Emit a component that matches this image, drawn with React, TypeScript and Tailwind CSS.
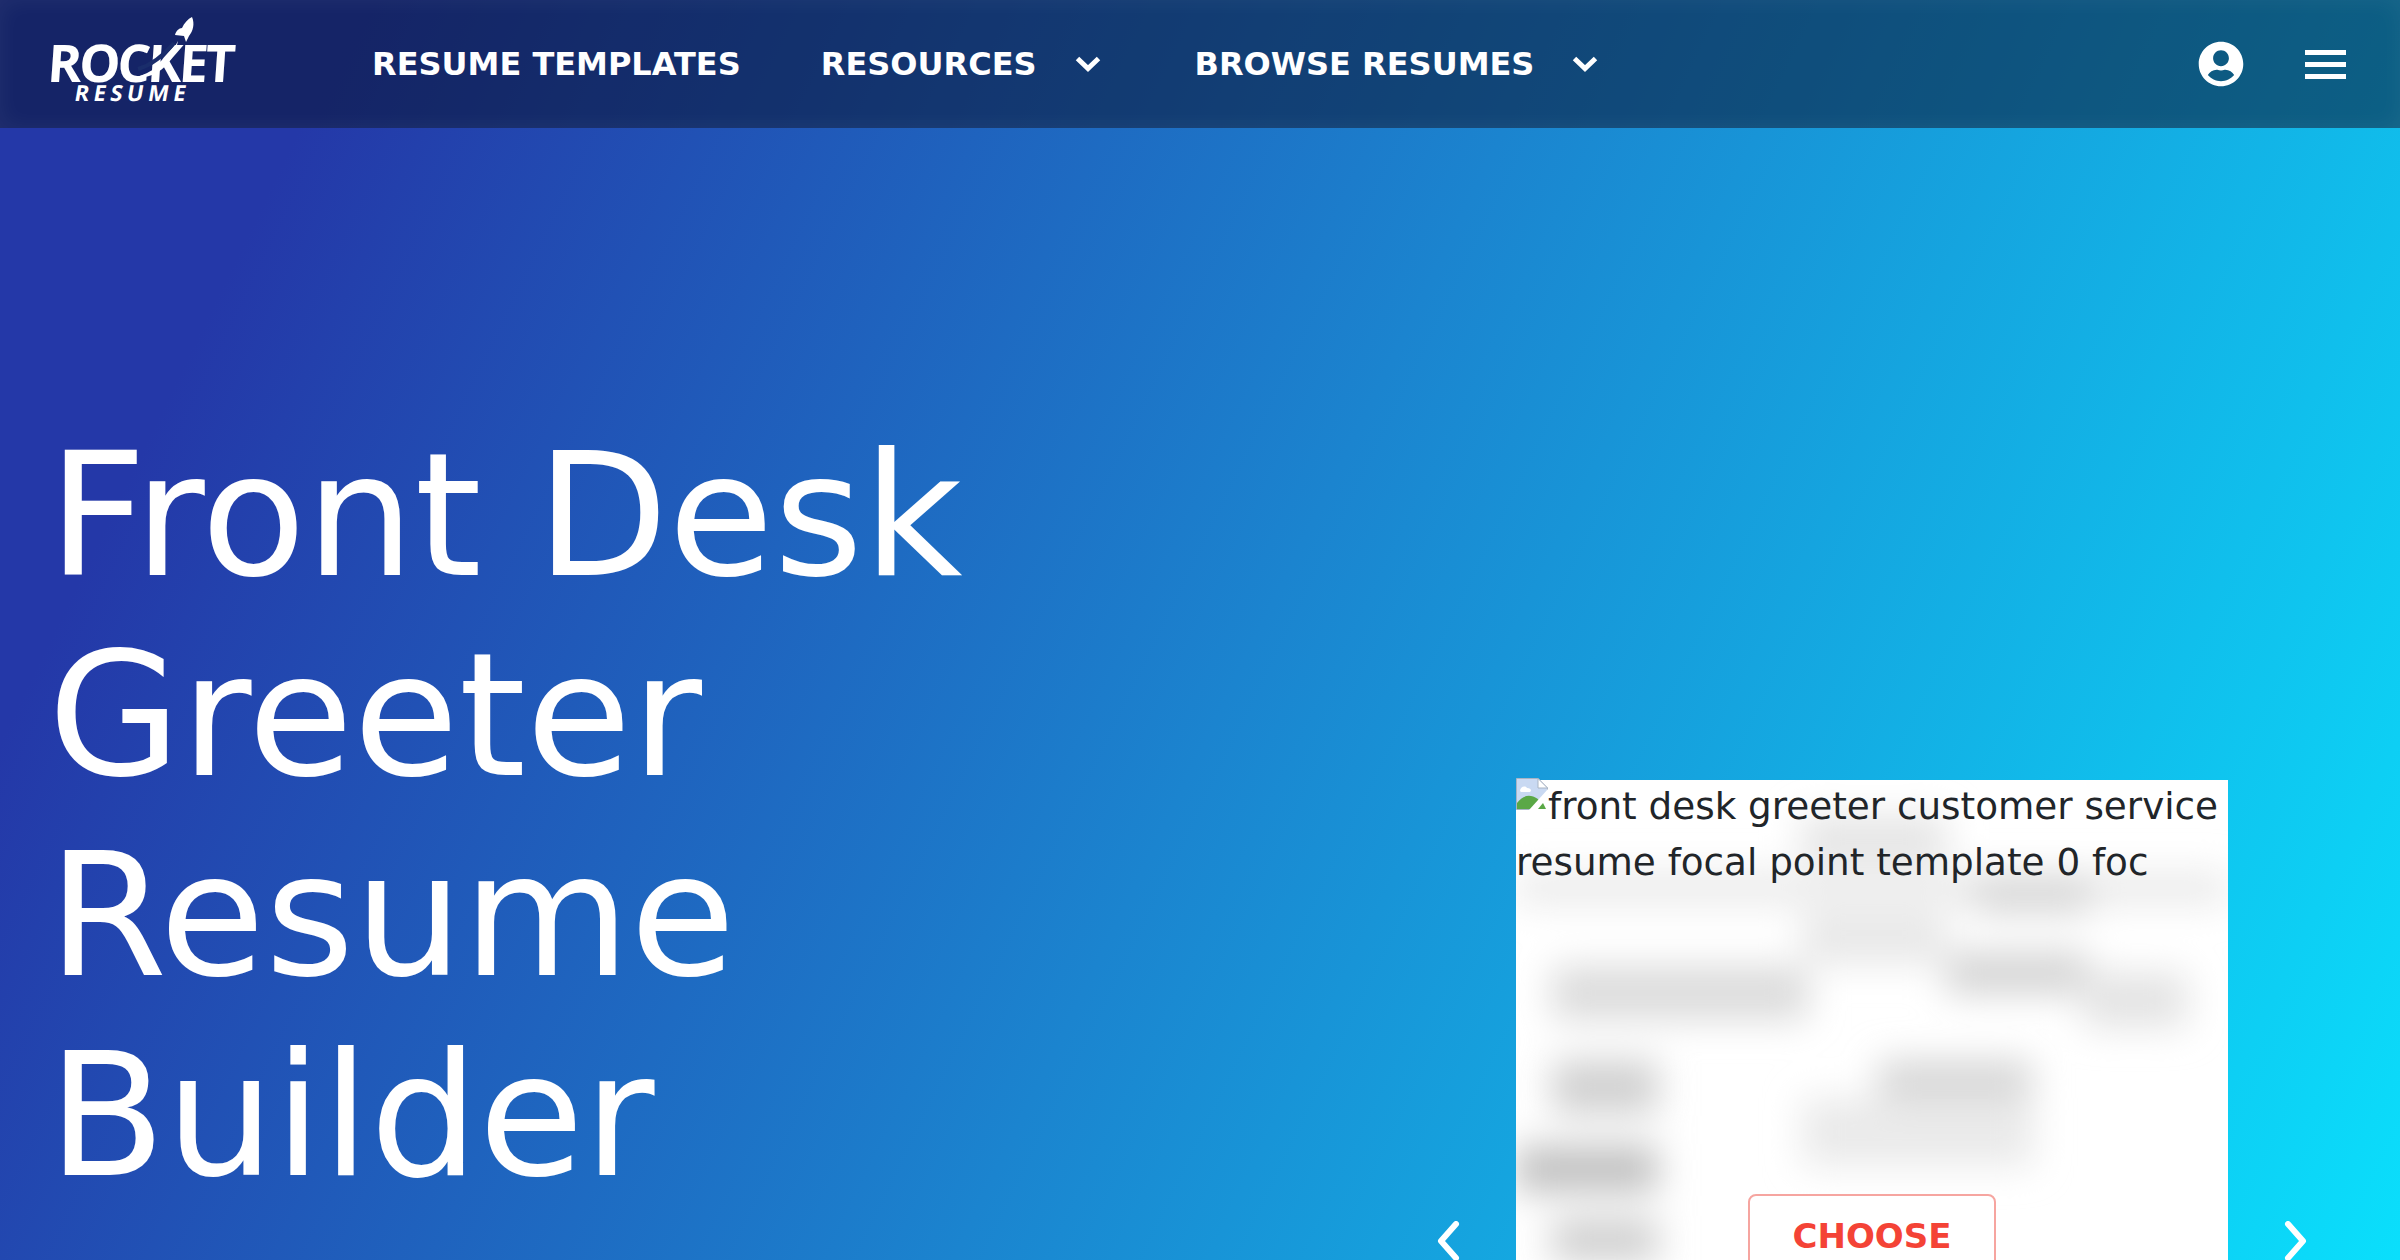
import { FaUserCircle } from 'react-icons/fa';

// ── Logo: real text, with the rocket and swoosh drawn over it ────────────────

function Logo() {
  return (
    <div className="relative w-[190px] h-[90px] shrink-0 text-white">
      <span className="absolute left-0 top-[17px] -skew-x-[4deg] text-[52px] leading-[51px] font-bold tracking-[-3px] font-['Open_Sans',sans-serif]">
        ROCKET
      </span>
      <span className="absolute left-[27px] top-[60px] -skew-x-[10deg] text-[22px] leading-[26px] font-bold tracking-[4.5px] font-['Open_Sans',sans-serif]">
        RESUME
      </span>
      <svg className="absolute left-0 top-0 overflow-visible" width="190" height="90" viewBox="0 0 190 90" fill="none">
        <path d="M90 50 C104 46 116 36 126 24" stroke="#1a2d6b" strokeWidth="4" />
        <path d="M85 59 C104 55 120 42 130 22 C126 42 112 60 85 59 Z" fill="#fff" />
        <path d="M144 -2 C147 5 145 12 141 17 L138 23 L136 17 L127 16 C128 12 131 9 134 9 C136 4 140 0 144 -2 Z" fill="#fff" />
      </svg>
    </div>
  );
}

function Chevron() {
  return (
    <svg width="26" height="16" viewBox="0 0 26 16" fill="none" className="shrink-0">
      <path d="M2.5 2.5 L13 12.5 L23.5 2.5" stroke="#fff" strokeWidth="5" />
    </svg>
  );
}

// Browser's broken-image glyph, blown up
function BrokenImage() {
  return (
    <svg width="32" height="32" viewBox="0 0 32 32" className="inline-block align-top">
      <path d="M0.5 0.5 H22 L31.5 10 V31.5 H0.5 Z" fill="#c9d9f2" stroke="#a9b4c4" />
      <path d="M22 0.5 V10 H31.5 Z" fill="#fff" stroke="#a9b4c4" />
      <path d="M4 13 C4 9 9 7 11 10 C15 10 16 13 14 14 H5 Z" fill="#fff" />
      <path d="M1 31 V25 C8 15 20 14 30 31 Z" fill="#5aa846" />
      <path d="M13 32 L32 11 V32 Z" fill="#fff" />
      <path d="M22 31 L27 25 L30 31 Z" fill="#5aa846" />
    </svg>
  );
}

// Blurred picture that sits behind the alt text
function BlurredResume() {
  const blocks = [
    [286, 36, 144, 46, '#e4e4e4'],
    [0, 92, 712, 32, '#eaeaea'],
    [458, 98, 116, 34, '#d4d4d4'],
    [286, 132, 144, 52, '#e8e8e8'],
    [36, 186, 256, 54, '#dcdcdc'],
    [430, 172, 142, 42, '#d4d4d4'],
    [567, 192, 104, 56, '#e4e4e4'],
    [36, 280, 106, 54, '#d0d0d0'],
    [362, 280, 154, 38, '#d6d6d6'],
    [286, 318, 232, 68, '#eaeaea'],
    [0, 366, 142, 46, '#c0c0c0'],
    [36, 440, 106, 40, '#cccccc'],
  ] as const;

  return (
    <svg className="absolute inset-0" width="712" height="600" viewBox="0 0 712 600">
      <defs>
        <filter id="soft" x="-10%" y="-10%" width="120%" height="120%">
          <feGaussianBlur stdDeviation="18" />
        </filter>
      </defs>
      <g filter="url(#soft)">
        {blocks.map(([x, y, w, h, fill], i) => (
          <rect key={i} x={x} y={y} width={w} height={h} fill={fill} />
        ))}
      </g>
    </svg>
  );
}

export default function App() {
  return (
    <div className="h-[1260px] overflow-hidden flex flex-col text-white font-['DejaVu_Sans',sans-serif] bg-[linear-gradient(116deg,#2438a8_12%,#1b84cf_52%,#0adffc_100%)]">
      {/* Nav */}
      <header className="h-[128px] shrink-0 flex items-center pl-[48px] pr-[54px] bg-[rgba(10,20,50,0.55)] shadow-[inset_0_0_24px_rgba(255,255,255,0.06)]">
        <Logo />
        <nav className="flex items-center ml-[134px] text-[32px] font-bold leading-none">
          <a>RESUME TEMPLATES</a>
          <a className="ml-[80px]">RESOURCES</a>
          <span className="ml-[38px]"><Chevron /></span>
          <a className="ml-[94px]">BROWSE RESUMES</a>
          <span className="ml-[38px]"><Chevron /></span>
        </nav>
        <div className="ml-auto flex items-center gap-[61px]">
          <FaUserCircle size={46} />
          <div className="flex flex-col gap-[7px] w-[41px]">
            <div className="h-[5px] bg-white" />
            <div className="h-[5px] bg-white" />
            <div className="h-[5px] bg-white" />
          </div>
        </div>
      </header>

      {/* Hero */}
      <main className="flex-1 flex justify-between">
        <h1 className="pl-[48px] mt-[288px] w-[1100px] text-[171.5px] leading-[200px] font-normal">
          Front Desk
          <br />
          Greeter
          <br />
          Resume
          <br />
          Builder
        </h1>

        <div className="flex items-start mt-[652px] mr-[92px] gap-[56px]">
          <svg width="24" height="40" viewBox="0 0 24 40" fill="none" className="mt-[441px] shrink-0">
            <path d="M20 3 L5 20 L20 37" stroke="#fff" strokeWidth="6" strokeLinecap="round" strokeLinejoin="round" />
          </svg>

          <div className="relative w-[712px] h-[600px] bg-white text-[#212529] text-[37.3px] leading-[56px] shrink-0">
            <BlurredResume />
            <p className="relative -mt-[2px]">
              <BrokenImage />
              front desk greeter customer service resume focal point template 0 foc
            </p>
            <button className="absolute left-[232px] top-[414px] w-[248px] h-[120px] rounded-[8px] border-2 border-[#f6a5a0] bg-white/90 pt-[20px] text-[34px] leading-[40px] font-bold text-[#f44336] flex justify-center items-start">
              CHOOSE
            </button>
          </div>

          <svg width="24" height="40" viewBox="0 0 24 40" fill="none" className="mt-[441px] shrink-0">
            <path d="M4 3 L19 20 L4 37" stroke="#fff" strokeWidth="6" strokeLinecap="round" strokeLinejoin="round" />
          </svg>
        </div>
      </main>
    </div>
  );
}
